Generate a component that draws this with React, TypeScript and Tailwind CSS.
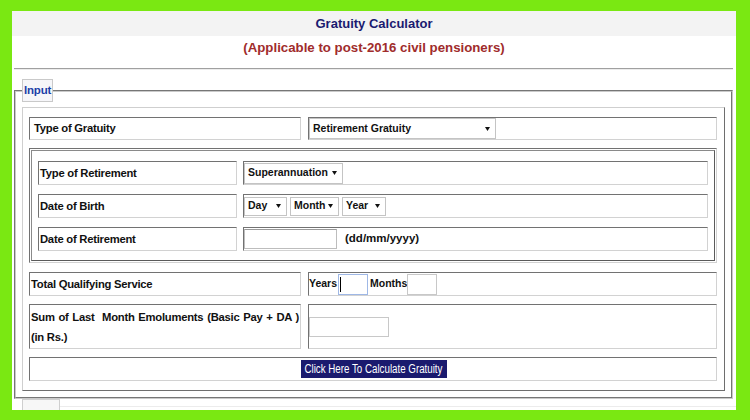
import React from 'react';

// small down-arrow used inside the fake select boxes
const Arrow = () => (
  <svg width="5" height="4" viewBox="0 0 5 4" className="shrink-0">
    <path d="M0 0H5L2.5 4Z" fill="#111" />
  </svg>
);

const Dropdown = ({ text, className }: { text: string; className: string }) => (
  <div
    className={`flex items-center justify-between border border-[#c4c4c4] bg-white pl-[3px] pr-[5px] text-[10.5px] font-bold text-[#111] ${className}`}
  >
    <span>{text}</span>
    <Arrow />
  </div>
);

const inset =
  'border border-t-[#727272] border-l-[#727272] border-b-[#d2d2d2] border-r-[#d2d2d2]';

const Label = ({ text, className = '' }: { text: string; className?: string }) => (
  <div
    className={`flex items-center text-[11.25px] font-bold tracking-[-0.25px] text-[#111] ${inset} ${className}`}
  >
    {text}
  </div>
);

const App = () => {
  return (
    <div className="w-[750px] h-[420px] overflow-hidden bg-[#7ae812] pt-[11px] pl-[12px] font-['Liberation_Sans',Arial,sans-serif]">
      <div className="w-[724px] h-[399px] bg-white flex flex-col">
        {/* header */}
        <div className="h-[25px] bg-[#f3f3f3] flex items-center justify-center text-[13px] font-bold text-[#1a1a70]">
          Gratuity Calculator
        </div>
        <div className="h-[24px] flex items-center justify-center text-[13.25px] font-bold text-[#a02c2c]">
          (Applicable to post-2016 civil pensioners)
        </div>
        <div className="mt-[8px] ml-[2px] w-[719px] border-t border-t-[#a0a0a0] border-b border-b-[#ececec]" />

        <fieldset className="mt-[9px] ml-[2px] w-[719px] border-2 [border-style:groove] border-[#cacaca] px-[6px] pt-[5px] pb-[6px]">
          <legend className="h-[23px] px-[1px] border border-[#c9c9c9] bg-[#f6f6f9] text-[11.5px] leading-[21px] font-bold tracking-[-0.2px] text-[#1c3fa8]">
            Input
          </legend>

          {/* main table */}
          <div className="border border-t-[#cfcfcf] border-l-[#cfcfcf] border-b-[#6e6e6e] border-r-[#6e6e6e] pt-[9px] pb-[9px] pl-[6px] pr-[7px] flex flex-col gap-[8px]">
            <div className="flex gap-[7px]">
              <Label text="Type of Gratuity" className="w-[272px] h-[23px] pl-[4px]" />
              <div className={`w-[409px] h-[23px] ${inset}`}>
                <Dropdown text="Retirement Gratuity" className="w-[187px] h-[21px]" />
              </div>
            </div>

            {/* nested table */}
            <div className={`h-[115px] p-[1px] ${inset}`}>
              <div className="h-full border border-t-[#8a8a8a] border-l-[#8a8a8a] border-b-[#5a5a5a] border-r-[#5a5a5a] pt-[10px] pb-[9px] px-[6px] flex flex-col gap-[9px]">
                <div className="flex gap-[6px]">
                  <Label text="Type of Retirement" className="w-[199px] h-[24px] pl-[1px]" />
                  <div className={`w-[465px] h-[24px] flex items-center ${inset}`}>
                    <Dropdown text="Superannuation" className="w-[99px] h-[21px]" />
                  </div>
                </div>
                <div className="flex gap-[6px]">
                  <Label text="Date of Birth" className="w-[199px] h-[24px] pl-[1px]" />
                  <div className={`w-[465px] h-[24px] flex items-center gap-[3px] ${inset}`}>
                    <Dropdown text="Day" className="w-[43px] h-[19px]" />
                    <Dropdown text="Month" className="w-[49px] h-[19px]" />
                    <Dropdown text="Year" className="w-[44px] h-[19px]" />
                  </div>
                </div>
                <div className="flex gap-[6px]">
                  <Label text="Date of Retirement" className="w-[199px] h-[24px] pl-[1px]" />
                  <div className={`w-[465px] h-[24px] flex items-center ${inset}`}>
                    <div className="w-[93px] h-[20px] border border-[#bdbdbd] border-t-[#9a9a9a] bg-white" />
                    <span className="ml-[8px] text-[11.5px] font-bold text-[#111]">(dd/mm/yyyy)</span>
                  </div>
                </div>
              </div>
            </div>

            <div className="flex gap-[7px] mt-[1px]">
              <Label text="Total Qualifying Service" className="w-[272px] h-[24px] pl-[1px]" />
              <div className={`w-[409px] h-[24px] flex items-center text-[10.5px] font-bold text-[#111] ${inset}`}>
                <span>Years</span>
                <div className="ml-[1px] w-[30px] h-[21px] border border-[#9fb8e6] bg-white flex items-center pl-[1px]">
                  <div className="w-[1px] h-[15px] bg-black" />
                </div>
                <span className="ml-[2px]">Months</span>
                <div className="w-[30px] h-[21px] border border-[#c8c8c8] bg-white" />
              </div>
            </div>

            <div className="flex gap-[7px]">
              <div className={`w-[272px] h-[45px] flex flex-col justify-center px-[1px] text-[11.25px] leading-[20px] font-bold tracking-[-0.25px] text-[#111] ${inset}`}>
                <div className="text-justify [text-align-last:justify] whitespace-pre">Sum of Last  Month Emoluments (Basic Pay + DA )</div>
                <div>(in Rs.)</div>
              </div>
              <div className={`w-[409px] h-[45px] flex items-center ${inset}`}>
                <div className="w-[80px] h-[20px] border border-[#c8c8c8] bg-white" />
              </div>
            </div>

            <div className={`w-[688px] h-[24px] flex items-center justify-center ${inset}`}>
              <button
                type="button"
                className="ml-[1px] w-[146px] h-[18px] bg-[#1a1a6e] text-white flex items-center justify-center overflow-visible"
              >
                <span className="inline-block shrink-0 whitespace-nowrap text-[12.5px] leading-[18px] scale-x-[0.78]">
                  Click Here To Calculate Gratuity
                </span>
              </button>
            </div>
          </div>
        </fieldset>

        {/* top of the next section, cut off */}
        <div className="flex items-end h-[11px] pl-[10px]">
          <div className="w-[38px] h-[11px] border-t border-l border-r border-[#cfcfcf] bg-[#f7f7f7]" />
          <div className="flex-1 mb-[3px] border-b border-[#ececec]" />
        </div>
      </div>
    </div>
  );
};

export default App;
